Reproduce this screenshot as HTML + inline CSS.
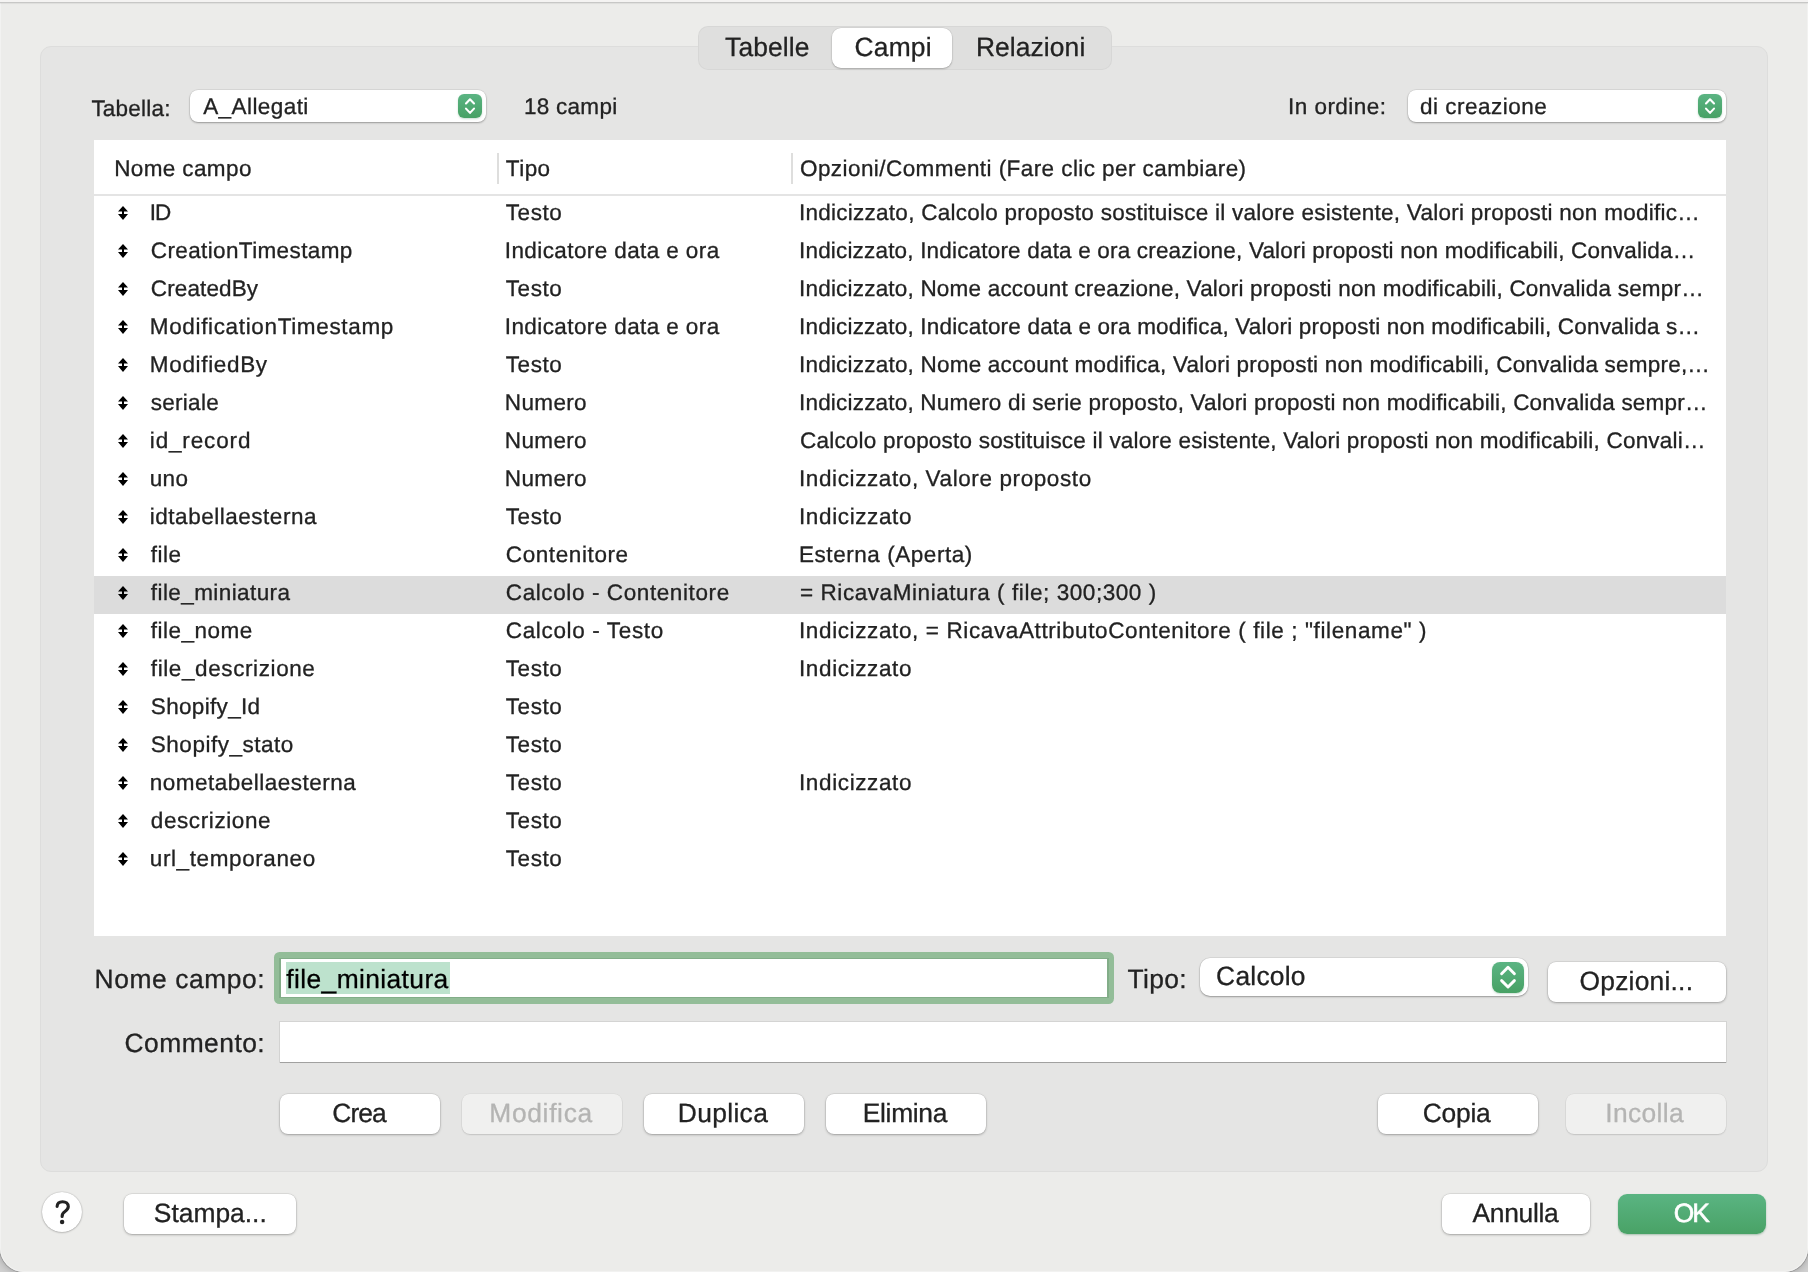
<!DOCTYPE html>
<html><head><meta charset="utf-8"><title>Gestisci database</title>
<style>
html,body{margin:0;padding:0}
body{width:1808px;height:1272px;overflow:hidden;position:relative;background:#d0d0d0;font-family:"Liberation Sans",sans-serif;}
div{position:absolute;box-sizing:border-box}
.win{left:0;top:0;width:1808px;height:1272px;background:#ececea;border-radius:0 0 24px 24px;box-shadow:0 0 0 1px #9a9a9a, 0 0 6px 2px rgba(0,0,0,0.18), inset 0 0 0 1px #f2f2f1}
.topstrip{left:0;top:0;width:1808px;height:2px;background:#f4f3f2}
.topline{left:0;top:2px;width:1808px;height:1px;background:#c7c7c6;box-shadow:0 1px 1px rgba(0,0,0,0.07)}
.leftline{display:none}
.group{left:40px;top:46px;width:1728px;height:1126px;background:#e5e5e4;border:1px solid #dddddc;border-radius:11px}
.seg{left:698px;top:26px;width:414px;height:43.5px;background:#dfdfde;border-radius:10px;box-shadow:inset 0 0 0 1px rgba(0,0,0,0.035)}
.segsel{left:832px;top:28px;width:120px;height:40px;background:#fff;border-radius:9px;box-shadow:0 1px 2px rgba(0,0,0,0.22),0 0 0 0.5px rgba(0,0,0,0.08)}
.pop{background:#fff;border-radius:8px;box-shadow:0 1px 2px rgba(0,0,0,0.30),0 0 0 0.5px rgba(0,0,0,0.10)}
.stp{background:linear-gradient(#5bb483,#47a164);box-shadow:0 1px 2px rgba(40,120,70,0.25)}
.stp svg{display:block}
.table{left:94px;top:140px;width:1632px;height:796px;background:#fff}
.hline{left:94px;top:194px;width:1632px;height:2px;background:#e4e4e4}
.vsep{width:2px;top:153px;height:31px;background:#dededd}
.sel{left:94px;top:576px;width:1632px;height:38px;background:#dcdcdc}
.btn{background:#fff;border-radius:8px;box-shadow:0 1px 2.5px rgba(0,0,0,0.27),0 0 0 0.5px rgba(0,0,0,0.11)}
.btn.dis{background:#f0f0ef;box-shadow:0 1px 1.5px rgba(0,0,0,0.12),0 0 0 0.5px rgba(0,0,0,0.06)}
.btn.ok{border-radius:9px;background:linear-gradient(#5ab482,#49a266);box-shadow:0 1px 2px rgba(40,110,70,0.35)}
.help{left:42px;top:1192px;width:40px;height:40px;border-radius:20px;background:#fff;box-shadow:0 0.5px 2px rgba(0,0,0,0.30),0 0 1px rgba(0,0,0,0.22)}
.ring{left:274px;top:952px;width:840px;height:52px;background:#93bd98;border-radius:5.5px}
.ring2{left:279.3px;top:957.8px;width:829.4px;height:40.6px;background:#82ad88}
.field{background:#fff}
.tsel{left:286px;top:962.2px;width:164px;height:31.6px;background:#bde2cd}
.cfield{left:280px;top:1022px;width:1446px;height:40px;background:#fff;box-shadow:0 1px 0.5px rgba(0,0,0,0.24),0 0 0 1px rgba(0,0,0,0.075)}
.tx{white-space:pre;line-height:1;text-rendering:geometricPrecision;-webkit-text-stroke:0.3px currentColor}
.hd{width:10px;height:14px}
</style></head><body>
<div class="win"></div><div class="topstrip"></div><div class="topline"></div><div class="leftline"></div>
<div class="group"></div>
<div class="seg"></div><div class="segsel"></div>

<div class="pop" style="left:189.5px;top:90px;width:296.5px;height:32px;"></div>
<div class="stp" style="left:458px;top:94px;width:24px;height:24px;border-radius:6px"><svg width="24" height="24" viewBox="0 0 24 24"><path d="M8.00 9.40 L12.00 5.30 L16.00 9.40 M8.00 14.60 L12.00 18.90 L16.00 14.60" fill="none" stroke="#fff" stroke-width="2.1" stroke-linecap="round" stroke-linejoin="round"/></svg></div>
<div class="pop" style="left:1407.5px;top:90px;width:318.5px;height:32px;"></div>
<div class="stp" style="left:1698px;top:94px;width:24px;height:24px;border-radius:6px"><svg width="24" height="24" viewBox="0 0 24 24"><path d="M8.00 9.40 L12.00 5.30 L16.00 9.40 M8.00 14.60 L12.00 18.90 L16.00 14.60" fill="none" stroke="#fff" stroke-width="2.1" stroke-linecap="round" stroke-linejoin="round"/></svg></div>
<div class="table"></div><div class="hline"></div>
<div class="vsep" style="left:497px"></div><div class="vsep" style="left:791px"></div>
<div class="sel"></div>
<div class="hd" style="left:118px;top:206px"><svg width="10" height="14" viewBox="0 0 10 14" style="display:block"><path d="M5 0 L10 5.6 L6 5.6 L6 8.1 L10 8.1 L5 14 L0 8.1 L4 8.1 L4 5.6 L0 5.6 Z" fill="#000"/></svg></div>
<div class="hd" style="left:118px;top:244px"><svg width="10" height="14" viewBox="0 0 10 14" style="display:block"><path d="M5 0 L10 5.6 L6 5.6 L6 8.1 L10 8.1 L5 14 L0 8.1 L4 8.1 L4 5.6 L0 5.6 Z" fill="#000"/></svg></div>
<div class="hd" style="left:118px;top:282px"><svg width="10" height="14" viewBox="0 0 10 14" style="display:block"><path d="M5 0 L10 5.6 L6 5.6 L6 8.1 L10 8.1 L5 14 L0 8.1 L4 8.1 L4 5.6 L0 5.6 Z" fill="#000"/></svg></div>
<div class="hd" style="left:118px;top:320px"><svg width="10" height="14" viewBox="0 0 10 14" style="display:block"><path d="M5 0 L10 5.6 L6 5.6 L6 8.1 L10 8.1 L5 14 L0 8.1 L4 8.1 L4 5.6 L0 5.6 Z" fill="#000"/></svg></div>
<div class="hd" style="left:118px;top:358px"><svg width="10" height="14" viewBox="0 0 10 14" style="display:block"><path d="M5 0 L10 5.6 L6 5.6 L6 8.1 L10 8.1 L5 14 L0 8.1 L4 8.1 L4 5.6 L0 5.6 Z" fill="#000"/></svg></div>
<div class="hd" style="left:118px;top:396px"><svg width="10" height="14" viewBox="0 0 10 14" style="display:block"><path d="M5 0 L10 5.6 L6 5.6 L6 8.1 L10 8.1 L5 14 L0 8.1 L4 8.1 L4 5.6 L0 5.6 Z" fill="#000"/></svg></div>
<div class="hd" style="left:118px;top:434px"><svg width="10" height="14" viewBox="0 0 10 14" style="display:block"><path d="M5 0 L10 5.6 L6 5.6 L6 8.1 L10 8.1 L5 14 L0 8.1 L4 8.1 L4 5.6 L0 5.6 Z" fill="#000"/></svg></div>
<div class="hd" style="left:118px;top:472px"><svg width="10" height="14" viewBox="0 0 10 14" style="display:block"><path d="M5 0 L10 5.6 L6 5.6 L6 8.1 L10 8.1 L5 14 L0 8.1 L4 8.1 L4 5.6 L0 5.6 Z" fill="#000"/></svg></div>
<div class="hd" style="left:118px;top:510px"><svg width="10" height="14" viewBox="0 0 10 14" style="display:block"><path d="M5 0 L10 5.6 L6 5.6 L6 8.1 L10 8.1 L5 14 L0 8.1 L4 8.1 L4 5.6 L0 5.6 Z" fill="#000"/></svg></div>
<div class="hd" style="left:118px;top:548px"><svg width="10" height="14" viewBox="0 0 10 14" style="display:block"><path d="M5 0 L10 5.6 L6 5.6 L6 8.1 L10 8.1 L5 14 L0 8.1 L4 8.1 L4 5.6 L0 5.6 Z" fill="#000"/></svg></div>
<div class="hd" style="left:118px;top:586px"><svg width="10" height="14" viewBox="0 0 10 14" style="display:block"><path d="M5 0 L10 5.6 L6 5.6 L6 8.1 L10 8.1 L5 14 L0 8.1 L4 8.1 L4 5.6 L0 5.6 Z" fill="#000"/></svg></div>
<div class="hd" style="left:118px;top:624px"><svg width="10" height="14" viewBox="0 0 10 14" style="display:block"><path d="M5 0 L10 5.6 L6 5.6 L6 8.1 L10 8.1 L5 14 L0 8.1 L4 8.1 L4 5.6 L0 5.6 Z" fill="#000"/></svg></div>
<div class="hd" style="left:118px;top:662px"><svg width="10" height="14" viewBox="0 0 10 14" style="display:block"><path d="M5 0 L10 5.6 L6 5.6 L6 8.1 L10 8.1 L5 14 L0 8.1 L4 8.1 L4 5.6 L0 5.6 Z" fill="#000"/></svg></div>
<div class="hd" style="left:118px;top:700px"><svg width="10" height="14" viewBox="0 0 10 14" style="display:block"><path d="M5 0 L10 5.6 L6 5.6 L6 8.1 L10 8.1 L5 14 L0 8.1 L4 8.1 L4 5.6 L0 5.6 Z" fill="#000"/></svg></div>
<div class="hd" style="left:118px;top:738px"><svg width="10" height="14" viewBox="0 0 10 14" style="display:block"><path d="M5 0 L10 5.6 L6 5.6 L6 8.1 L10 8.1 L5 14 L0 8.1 L4 8.1 L4 5.6 L0 5.6 Z" fill="#000"/></svg></div>
<div class="hd" style="left:118px;top:776px"><svg width="10" height="14" viewBox="0 0 10 14" style="display:block"><path d="M5 0 L10 5.6 L6 5.6 L6 8.1 L10 8.1 L5 14 L0 8.1 L4 8.1 L4 5.6 L0 5.6 Z" fill="#000"/></svg></div>
<div class="hd" style="left:118px;top:814px"><svg width="10" height="14" viewBox="0 0 10 14" style="display:block"><path d="M5 0 L10 5.6 L6 5.6 L6 8.1 L10 8.1 L5 14 L0 8.1 L4 8.1 L4 5.6 L0 5.6 Z" fill="#000"/></svg></div>
<div class="hd" style="left:118px;top:852px"><svg width="10" height="14" viewBox="0 0 10 14" style="display:block"><path d="M5 0 L10 5.6 L6 5.6 L6 8.1 L10 8.1 L5 14 L0 8.1 L4 8.1 L4 5.6 L0 5.6 Z" fill="#000"/></svg></div>
<div class="ring"></div><div class="ring2"></div>
<div class="field" style="left:280.8px;top:959.2px;width:826.4px;height:37.7px;"></div>
<div class="tsel"></div>
<div class="pop" style="left:1200px;top:958px;width:328px;height:38px;border-radius:10px"></div>
<div class="stp" style="left:1492px;top:962px;width:32px;height:30.5px;border-radius:8px"><svg width="32" height="30.5" viewBox="0 0 32 30.5"><path d="M9.60 11.70 L16.00 5.30 L22.40 11.70 M9.60 18.60 L16.00 25.00 L22.40 18.60" fill="none" stroke="#fff" stroke-width="2.9" stroke-linecap="round" stroke-linejoin="round"/></svg></div>
<div class="btn" style="left:1548px;top:962px;width:178px;height:40px;"></div>
<div class="cfield"></div>
<div class="btn" style="left:280px;top:1094px;width:160px;height:40px;"></div>
<div class="btn dis" style="left:462px;top:1094px;width:160px;height:40px;"></div>
<div class="btn" style="left:644px;top:1094px;width:160px;height:40px;"></div>
<div class="btn" style="left:826px;top:1094px;width:160px;height:40px;"></div>
<div class="btn" style="left:1378px;top:1094px;width:160px;height:40px;"></div>
<div class="btn dis" style="left:1566px;top:1094px;width:160px;height:40px;"></div>
<div class="help"><svg width="40" height="40" viewBox="0 -0.4 40 40" style="display:block"><path d="M15.1 14.0 C15.3 10.8 17.4 9.3 20.6 9.3 C23.9 9.3 26.3 11.2 26.3 14.2 C26.3 16.5 25 17.8 23 19.1 C21 20.4 20.1 21.5 20.1 24.0" fill="none" stroke="#222" stroke-width="3.1" stroke-linecap="round" stroke-linejoin="round"/><circle cx="20.1" cy="29.6" r="2.25" fill="#222"/></svg></div>
<div class="btn" style="left:124px;top:1194px;width:172px;height:40px;"></div>
<div class="btn" style="left:1442px;top:1194px;width:148px;height:40px;"></div>
<div class="btn ok" style="left:1618px;top:1194px;width:148px;height:40px;"></div>
<div id="txl" style="left:0;top:0;width:1808px;height:1272px;will-change:transform">
<div class="tx" id="t0" style="left:725.10px;top:34.00px;font-size:26.4px;color:#222222;letter-spacing:0.133px;">Tabelle</div>
<div class="tx" id="t1" style="left:854.40px;top:34.00px;font-size:26.4px;color:#222222;letter-spacing:0.250px;">Campi</div>
<div class="tx" id="t2" style="left:975.90px;top:34.00px;font-size:26.4px;color:#222222;letter-spacing:0.100px;">Relazioni</div>
<div class="tx" id="t3" style="left:91.40px;top:98.00px;font-size:22.5px;color:#222222;letter-spacing:0.229px;">Tabella:</div>
<div class="tx" id="t4" style="left:203.20px;top:96.00px;font-size:22.5px;color:#222222;letter-spacing:0.422px;">A_Allegati</div>
<div class="tx" id="t5" style="left:523.90px;top:96.00px;font-size:22.5px;color:#222222;letter-spacing:0.286px;">18 campi</div>
<div class="tx" id="t6" style="left:1288.00px;top:96.00px;font-size:22.5px;color:#222222;letter-spacing:0.467px;">In ordine:</div>
<div class="tx" id="t7" style="left:1419.90px;top:96.00px;font-size:22.5px;color:#222222;letter-spacing:0.509px;">di creazione</div>
<div class="tx" id="t8" style="left:114.20px;top:158.00px;font-size:22.5px;color:#222222;letter-spacing:0.378px;">Nome campo</div>
<div class="tx" id="t9" style="left:505.80px;top:158.00px;font-size:22.5px;color:#222222;letter-spacing:0.467px;">Tipo</div>
<div class="tx" id="t10" style="left:800.00px;top:158.00px;font-size:22.5px;color:#222222;letter-spacing:0.430px;">Opzioni/Commenti (Fare clic per cambiare)</div>
<div class="tx" id="t11" style="left:149.80px;top:202.00px;font-size:22.5px;color:#222222;letter-spacing:-1.000px;">ID</div>
<div class="tx" id="t12" style="left:505.80px;top:202.00px;font-size:22.5px;color:#222222;letter-spacing:0.550px;">Testo</div>
<div class="tx" id="t13" style="left:799.00px;top:202.00px;font-size:22.5px;color:#222222;letter-spacing:0.258px;">Indicizzato, Calcolo proposto sostituisce il valore esistente, Valori proposti non modific…</div>
<div class="tx" id="t14" style="left:150.80px;top:240.00px;font-size:22.5px;color:#222222;letter-spacing:0.375px;">CreationTimestamp</div>
<div class="tx" id="t15" style="left:504.80px;top:240.00px;font-size:22.5px;color:#222222;letter-spacing:0.400px;">Indicatore data e ora</div>
<div class="tx" id="t16" style="left:799.00px;top:240.00px;font-size:22.5px;color:#222222;letter-spacing:0.182px;">Indicizzato, Indicatore data e ora creazione, Valori proposti non modificabili, Convalida…</div>
<div class="tx" id="t17" style="left:150.80px;top:278.00px;font-size:22.5px;color:#222222;letter-spacing:0.125px;">CreatedBy</div>
<div class="tx" id="t18" style="left:505.80px;top:278.00px;font-size:22.5px;color:#222222;letter-spacing:0.550px;">Testo</div>
<div class="tx" id="t19" style="left:799.00px;top:278.00px;font-size:22.5px;color:#222222;letter-spacing:0.200px;">Indicizzato, Nome account creazione, Valori proposti non modificabili, Convalida sempr…</div>
<div class="tx" id="t20" style="left:149.80px;top:316.00px;font-size:22.5px;color:#222222;letter-spacing:0.650px;">ModificationTimestamp</div>
<div class="tx" id="t21" style="left:504.80px;top:316.00px;font-size:22.5px;color:#222222;letter-spacing:0.400px;">Indicatore data e ora</div>
<div class="tx" id="t22" style="left:799.00px;top:316.00px;font-size:22.5px;color:#222222;letter-spacing:0.191px;">Indicizzato, Indicatore data e ora modifica, Valori proposti non modificabili, Convalida s…</div>
<div class="tx" id="t23" style="left:149.80px;top:354.00px;font-size:22.5px;color:#222222;letter-spacing:0.667px;">ModifiedBy</div>
<div class="tx" id="t24" style="left:505.80px;top:354.00px;font-size:22.5px;color:#222222;letter-spacing:0.550px;">Testo</div>
<div class="tx" id="t25" style="left:799.00px;top:354.00px;font-size:22.5px;color:#222222;letter-spacing:0.211px;">Indicizzato, Nome account modifica, Valori proposti non modificabili, Convalida sempre,…</div>
<div class="tx" id="t26" style="left:150.80px;top:392.00px;font-size:22.5px;color:#222222;letter-spacing:0.267px;">seriale</div>
<div class="tx" id="t27" style="left:504.80px;top:392.00px;font-size:22.5px;color:#222222;letter-spacing:0.360px;">Numero</div>
<div class="tx" id="t28" style="left:799.00px;top:392.00px;font-size:22.5px;color:#222222;letter-spacing:0.195px;">Indicizzato, Numero di serie proposto, Valori proposti non modificabili, Convalida sempr…</div>
<div class="tx" id="t29" style="left:149.80px;top:430.00px;font-size:22.5px;color:#222222;letter-spacing:0.850px;">id_record</div>
<div class="tx" id="t30" style="left:504.80px;top:430.00px;font-size:22.5px;color:#222222;letter-spacing:0.360px;">Numero</div>
<div class="tx" id="t31" style="left:800.00px;top:430.00px;font-size:22.5px;color:#222222;letter-spacing:0.211px;">Calcolo proposto sostituisce il valore esistente, Valori proposti non modificabili, Convali…</div>
<div class="tx" id="t32" style="left:149.80px;top:468.00px;font-size:22.5px;color:#222222;letter-spacing:0.300px;">uno</div>
<div class="tx" id="t33" style="left:504.80px;top:468.00px;font-size:22.5px;color:#222222;letter-spacing:0.360px;">Numero</div>
<div class="tx" id="t34" style="left:799.00px;top:468.00px;font-size:22.5px;color:#222222;letter-spacing:0.600px;">Indicizzato, Valore proposto</div>
<div class="tx" id="t35" style="left:149.80px;top:506.00px;font-size:22.5px;color:#222222;letter-spacing:0.520px;">idtabellaesterna</div>
<div class="tx" id="t36" style="left:505.80px;top:506.00px;font-size:22.5px;color:#222222;letter-spacing:0.550px;">Testo</div>
<div class="tx" id="t37" style="left:799.00px;top:506.00px;font-size:22.5px;color:#222222;letter-spacing:0.620px;">Indicizzato</div>
<div class="tx" id="t38" style="left:150.80px;top:544.00px;font-size:22.5px;color:#222222;letter-spacing:0.467px;">file</div>
<div class="tx" id="t39" style="left:505.80px;top:544.00px;font-size:22.5px;color:#222222;letter-spacing:0.600px;">Contenitore</div>
<div class="tx" id="t40" style="left:799.00px;top:544.00px;font-size:22.5px;color:#222222;letter-spacing:0.547px;">Esterna (Aperta)</div>
<div class="tx" id="t41" style="left:150.80px;top:582.00px;font-size:22.5px;color:#222222;letter-spacing:0.415px;">file_miniatura</div>
<div class="tx" id="t42" style="left:505.80px;top:582.00px;font-size:22.5px;color:#222222;letter-spacing:0.600px;">Calcolo - Contenitore</div>
<div class="tx" id="t43" style="left:800.00px;top:582.00px;font-size:22.5px;color:#222222;letter-spacing:0.565px;">= RicavaMiniatura ( file; 300;300 )</div>
<div class="tx" id="t44" style="left:150.80px;top:620.00px;font-size:22.5px;color:#222222;letter-spacing:0.475px;">file_nome</div>
<div class="tx" id="t45" style="left:505.80px;top:620.00px;font-size:22.5px;color:#222222;letter-spacing:0.643px;">Calcolo - Testo</div>
<div class="tx" id="t46" style="left:799.00px;top:620.00px;font-size:22.5px;color:#222222;letter-spacing:0.616px;">Indicizzato, = RicavaAttributoContenitore ( file ; "filename" )</div>
<div class="tx" id="t47" style="left:150.80px;top:658.00px;font-size:22.5px;color:#222222;letter-spacing:0.600px;">file_descrizione</div>
<div class="tx" id="t48" style="left:505.80px;top:658.00px;font-size:22.5px;color:#222222;letter-spacing:0.550px;">Testo</div>
<div class="tx" id="t49" style="left:799.00px;top:658.00px;font-size:22.5px;color:#222222;letter-spacing:0.620px;">Indicizzato</div>
<div class="tx" id="t50" style="left:150.80px;top:696.00px;font-size:22.5px;color:#222222;letter-spacing:0.333px;">Shopify_Id</div>
<div class="tx" id="t51" style="left:505.80px;top:696.00px;font-size:22.5px;color:#222222;letter-spacing:0.550px;">Testo</div>
<div class="tx" id="t52" style="left:150.80px;top:734.00px;font-size:22.5px;color:#222222;letter-spacing:0.517px;">Shopify_stato</div>
<div class="tx" id="t53" style="left:505.80px;top:734.00px;font-size:22.5px;color:#222222;letter-spacing:0.550px;">Testo</div>
<div class="tx" id="t54" style="left:149.80px;top:772.00px;font-size:22.5px;color:#222222;letter-spacing:0.494px;">nometabellaesterna</div>
<div class="tx" id="t55" style="left:505.80px;top:772.00px;font-size:22.5px;color:#222222;letter-spacing:0.550px;">Testo</div>
<div class="tx" id="t56" style="left:799.00px;top:772.00px;font-size:22.5px;color:#222222;letter-spacing:0.620px;">Indicizzato</div>
<div class="tx" id="t57" style="left:150.80px;top:810.00px;font-size:22.5px;color:#222222;letter-spacing:0.600px;">descrizione</div>
<div class="tx" id="t58" style="left:505.80px;top:810.00px;font-size:22.5px;color:#222222;letter-spacing:0.550px;">Testo</div>
<div class="tx" id="t59" style="left:149.80px;top:848.00px;font-size:22.5px;color:#222222;letter-spacing:0.600px;">url_temporaneo</div>
<div class="tx" id="t60" style="left:505.80px;top:848.00px;font-size:22.5px;color:#222222;letter-spacing:0.550px;">Testo</div>
<div class="tx" id="t61" style="left:94.60px;top:966.00px;font-size:26.4px;color:#222222;letter-spacing:0.580px;">Nome campo:</div>
<div class="tx" id="t62" style="left:286.30px;top:966.00px;font-size:26.4px;color:#000000;letter-spacing:0.385px;">file_miniatura</div>
<div class="tx" id="t63" style="left:1127.40px;top:966.00px;font-size:26.4px;color:#222222;letter-spacing:0.400px;">Tipo:</div>
<div class="tx" id="t64" style="left:1216.10px;top:963.00px;font-size:26.4px;color:#222222;letter-spacing:0.233px;">Calcolo</div>
<div class="tx" id="t65" style="left:1579.50px;top:968.00px;font-size:26.4px;color:#222222;letter-spacing:0.222px;">Opzioni...</div>
<div class="tx" id="t66" style="left:124.50px;top:1030.00px;font-size:26.4px;color:#222222;letter-spacing:0.475px;">Commento:</div>
<div class="tx" id="t67" style="left:332.20px;top:1100.00px;font-size:26.4px;color:#222222;letter-spacing:-0.867px;">Crea</div>
<div class="tx" id="t68" style="left:489.30px;top:1100.00px;font-size:26.4px;color:#b4b4b3;letter-spacing:0.657px;">Modifica</div>
<div class="tx" id="t69" style="left:677.80px;top:1100.00px;font-size:26.4px;color:#222222;letter-spacing:0.333px;">Duplica</div>
<div class="tx" id="t70" style="left:862.80px;top:1100.00px;font-size:26.4px;color:#222222;letter-spacing:-0.333px;">Elimina</div>
<div class="tx" id="t71" style="left:1422.80px;top:1100.00px;font-size:26.4px;color:#222222;letter-spacing:-0.250px;">Copia</div>
<div class="tx" id="t72" style="left:1605.30px;top:1100.00px;font-size:26.4px;color:#b4b4b3;letter-spacing:0.333px;">Incolla</div>
<div class="tx" id="t73" style="left:153.80px;top:1200.00px;font-size:26.4px;color:#222222;letter-spacing:0.000px;">Stampa...</div>
<div class="tx" id="t74" style="left:1472.50px;top:1200.00px;font-size:26.4px;color:#222222;letter-spacing:-0.300px;">Annulla</div>
<div class="tx" id="t75" style="left:1673.80px;top:1200.00px;font-size:26.4px;color:#ffffff;letter-spacing:-2.000px;-webkit-text-stroke:0.6px #fff;">OK</div>
</div>
</body></html>
